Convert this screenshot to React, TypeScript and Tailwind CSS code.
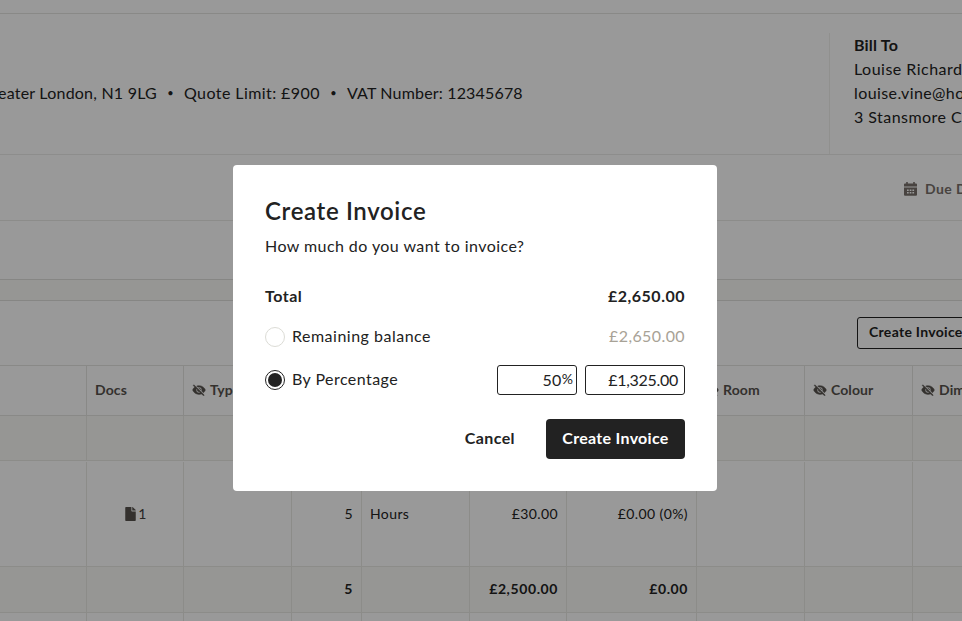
import React from 'react';
import { FaFile } from 'react-icons/fa';

interface Column {
  name: string;
  hidden?: boolean;
}

const columns: Column[] = [
  { name: '' },
  { name: 'Docs' },
  { name: 'Type', hidden: true },
  { name: 'Qty' },
  { name: 'Unit' },
  { name: 'Price' },
  { name: 'Discount' },
  { name: 'Room', hidden: true },
  { name: 'Colour', hidden: true },
  { name: 'Dimensions', hidden: true },
];

interface Row {
  id: string;
  className: string;
  cells: React.ReactNode[];
}

const docs = (
  <span className="flex items-center justify-center gap-0.5 pl-0.5 text-[#57534e]">
    <FaFile className="h-3.5 w-[11px]" />
    <span className="text-[#44403c]">1</span>
  </span>
);

const rows: Row[] = [
  { id: 'section', className: 'h-[45px] bg-[#fafaf7]', cells: ['', '', '', '', '', '', '', '', '', ''] },
  {
    id: 'labour',
    className: 'h-[106px] bg-white pt-px tracking-[0.4px]',
    cells: ['', docs, '', '5', 'Hours', '£30.00', '£0.00 (0%)', '', '', ''],
  },
  {
    id: 'total',
    className: 'h-[46px] bg-[#fafaf7] font-bold tracking-[0.6px]',
    cells: ['', '', '', '5', '', '£2,500.00', '£0.00', '', '', ''],
  },
  { id: 'next', className: 'h-[46px] bg-white', cells: ['', '', '', '', '', '', '', '', '', ''] },
];

const rightAligned = [3, 5, 6];

const gridCols = 'grid grid-cols-[87px_97px_108px_70px_108px_97px_130px_108px_108px_108px] w-[1021px]';

function CalendarIcon() {
  return (
    <svg viewBox="0 0 13 14" className="h-3.5 w-[13px] shrink-0" fill="currentColor">
      <path d="M2.2 0h1.6v1.6h5.4V0h1.6v1.6H12a1 1 0 0 1 1 1v1.9H0V2.6a1 1 0 0 1 1-1h1.2z" />
      <path
        fillRule="evenodd"
        d="M0 5.6h13v7.2a1 1 0 0 1-1 1H1a1 1 0 0 1-1-1zM3 7.4v1.5h1.7V7.4zm2.7 0v1.5h1.7V7.4zm2.7 0v1.5h1.7V7.4zM3 10.1v1.5h1.7v-1.5zm2.7 0v1.5h1.7v-1.5zm2.7 0v1.5h1.7v-1.5z"
      />
    </svg>
  );
}

function HiddenIcon() {
  return (
    <svg viewBox="0 0 24 24" className="size-3.5 shrink-0" fill="currentColor" stroke="currentColor" strokeWidth={0.8}>
      <path d="M12 7c2.76 0 5 2.24 5 5 0 .65-.13 1.26-.36 1.83l2.92 2.92c1.51-1.26 2.7-2.89 3.43-4.75-1.73-4.39-6-7.5-11-7.5-1.4 0-2.74.25-3.98.7l2.16 2.16C10.74 7.13 11.35 7 12 7zM2 4.27l2.28 2.28.46.46A11.804 11.804 0 0 0 1 12c1.73 4.39 6 7.5 11 7.5 1.55 0 3.03-.3 4.38-.84l.42.42L19.73 22 21 20.73 3.27 3 2 4.27zM7.53 9.8l1.55 1.55c-.05.21-.08.43-.08.65 0 1.66 1.34 3 3 3 .22 0 .44-.03.65-.08l1.55 1.55c-.67.33-1.41.53-2.2.53-2.76 0-5-2.24-5-5 0-.79.2-1.53.53-2.2zm4.31-.78l3.15 3.15.02-.16c0-1.66-1.34-3-3-3l-.17.01z" />
    </svg>
  );
}

function QuoteTable() {
  return (
    <div className="border-t border-[#e5e5e1] text-sm">
      <div className={`${gridCols} h-[50px] font-bold text-[#57534e]`}>
        {columns.map((col, i) => (
          <div key={i} className="flex items-center gap-1 border-r border-b border-[#e5e5e1] px-2 pb-px tracking-[0.1px]">
            {col.hidden && <HiddenIcon />}
            {col.name}
          </div>
        ))}
      </div>
      {rows.map((row) => (
        <div key={row.id} className={`${gridCols} ${row.className}`}>
          {row.cells.map((cell, i) => (
            <div
              key={i}
              className={`flex items-center border-r border-b border-[#e9e9e5] px-2 ${
                rightAligned.includes(i) ? 'justify-end' : i === 1 ? 'justify-center' : ''
              } ${row.id === 'total' ? 'pb-px' : ''}`}
            >
              {cell}
            </div>
          ))}
        </div>
      ))}
    </div>
  );
}

function Bullet() {
  return <span className="w-[27px] text-center text-[11px]">•</span>;
}

function QuotePage() {
  return (
    <div className="flex h-full w-[1021px] flex-col bg-white">
      <div className="h-3.5 shrink-0 border-b border-[#e5e5e1]" />
      <div className="flex h-[141px] shrink-0 border-b border-[#ecece9]">
        <div className="flex w-[829px] shrink-0 items-center pt-[18px] whitespace-nowrap">
          <span className="-ml-[2px] tracking-[0.22px]">eater London, N1 9LG</span>
          <Bullet />
          <span className="tracking-[0.42px]">Quote Limit: £900</span>
          <Bullet />
          <span className="tracking-[0.17px]">VAT Number: 12345678</span>
        </div>
        <div className="mt-[19px] border-l border-[#f0f0ed] pl-6 leading-6 whitespace-nowrap">
          <div className="font-bold tracking-[0.2px]">Bill To</div>
          <div className="tracking-[0.48px]">Louise Richardson</div>
          <div className="tracking-[0.4px]">louise.vine@hotmail.com</div>
          <div className="tracking-[0.45px]">3 Stansmore Close</div>
        </div>
      </div>
      <div className="flex h-[66px] shrink-0 items-center gap-2 border-b border-[#e9e9e6] pt-[3px] pl-[904px] text-sm font-bold text-[#78716c]">
        <CalendarIcon />
        <span className="tracking-[0.4px] whitespace-nowrap">Due Date</span>
      </div>
      <div className="h-[59px] shrink-0 border-b border-[#e0e0dc]" />
      <div className="h-[21px] shrink-0 border-b border-[#e0e0dc] bg-[#fafaf7]" />
      <div className="h-16 shrink-0 pt-4 pl-[857px]">
        <button className="h-8 w-[117px] rounded-[3px] border border-[#222] pb-0.5 pl-[11px] text-left text-sm font-bold tracking-[0.3px]">
          Create Invoice
        </button>
      </div>
      <QuoteTable />
    </div>
  );
}

function Radio({ checked }: { checked?: boolean }) {
  return (
    <span
      className={`flex size-5 items-center justify-center rounded-full border ${
        checked ? 'border-[#222]' : 'border-[#dcdcd6]'
      }`}
    >
      {checked && <span className="size-3.5 rounded-full bg-[#222]" />}
    </span>
  );
}

function CreateInvoiceDialog() {
  return (
    <div className="h-[326px] w-[484px] rounded bg-white px-8 pt-8">
      <h2 className="text-2xl leading-7 font-semibold tracking-[0.65px]">Create Invoice</h2>
      <p className="mt-[9px] leading-6 tracking-[0.43px]">How much do you want to invoice?</p>
      <div className="mt-[26px] flex justify-between leading-6 font-bold tracking-[0.5px]">
        <span>Total</span>
        <span>£2,650.00</span>
      </div>
      <div className="mt-[18px] flex items-center leading-6">
        <Radio />
        <span className="-mt-0.5 ml-[7px] tracking-[0.5px]">Remaining balance</span>
        <span className="-mt-0.5 ml-auto tracking-[0.4px] text-[#a8a296]">£2,650.00</span>
      </div>
      <div className="mt-[17px] flex items-center">
        <Radio checked />
        <span className="-mt-0.5 ml-[7px] tracking-[0.45px]">By Percentage</span>
        <div className="ml-auto flex h-[30px] w-20 items-center justify-end rounded-[3px] border border-[#222] pr-[3px]">
          <span className="tracking-[0.4px]">50</span>
          <span className="-mt-0.5 text-sm">%</span>
        </div>
        <div className="ml-2 flex h-[30px] w-[100px] items-center justify-end rounded-[3px] border border-[#222] pr-1.5 tracking-[-0.3px]">
          £1,325.00
        </div>
      </div>
      <div className="mt-6 flex items-center justify-end font-bold">
        <button className="mr-[31px] pb-0.5 tracking-[0.4px]">Cancel</button>
        <button className="h-10 w-[139px] rounded bg-[#222] pb-0.5 tracking-[0.3px] text-white">Create Invoice</button>
      </div>
    </div>
  );
}

export default function App() {
  return (
    <div className="relative h-[621px] w-[962px] overflow-hidden font-[Lato,sans-serif] text-base text-[#222]">
      <QuotePage />
      <div className="absolute inset-0 bg-black/40 pt-[165px] pl-[233px]">
        <CreateInvoiceDialog />
      </div>
    </div>
  );
}
